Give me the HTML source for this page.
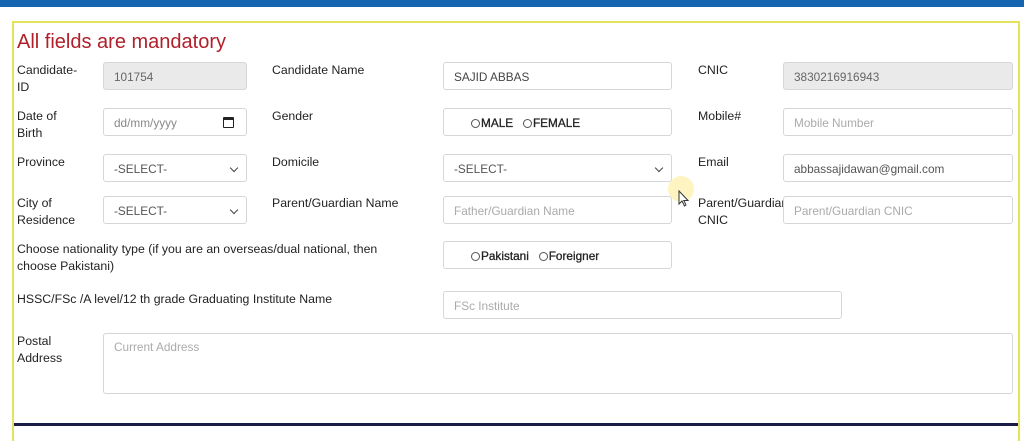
<!DOCTYPE html>
<html><head><style>
*{box-sizing:border-box;margin:0;padding:0}
body{width:1024px;height:429px;overflow:hidden;background:#fff;font-family:"Liberation Sans",sans-serif;color:#222;position:relative}
.top{position:absolute;left:0;top:0;width:1024px;height:7px;background:#1565b0}
.frame{position:absolute;left:12px;top:21px;width:1008px;height:420px;border:2px solid #e4e45a;border-bottom:none}
.h{position:absolute;left:17px;top:31px;font-size:20px;color:#b0202a}
.l{position:absolute;font-size:12.3px;line-height:17px;color:#222}
.i{position:absolute;height:28px;border:1px solid #d6d6d6;border-radius:3px;background:#fff;font-size:11.8px;color:#555;padding:0 10px;line-height:28px;white-space:nowrap}
.g{background:#eaeaea;color:#666}
.p{color:#aaa}
.s::after{content:"";position:absolute;right:9px;top:10px;width:5px;height:5px;border-right:1.5px solid #444;border-bottom:1.5px solid #444;transform:rotate(45deg)}
.r{color:#333;font-size:11.8px}
.r b{font-weight:normal;color:#222;-webkit-text-stroke:0.3px #222}
.r span{display:inline-block;width:9px;height:9px;border:1px solid #555;border-radius:50%;vertical-align:-1px;margin-right:1px}
.line{position:absolute;left:14px;top:423px;width:1004px;height:3px;background:#1b1b4a}
</style></head><body>
<div class="top"></div>
<div class="frame"></div>
<div class="h">All fields are mandatory</div>

<div class="l" style="left:17px;top:62px">Candidate-<br>ID</div>
<div class="i g" style="left:103px;top:62px;width:144px">101754</div>
<div class="l" style="left:272px;top:62px">Candidate Name</div>
<div class="i" style="left:443px;top:62px;width:229px;color:#444">SAJID ABBAS</div>
<div class="l" style="left:698px;top:62px">CNIC</div>
<div class="i g" style="left:783px;top:62px;width:230px">3830216916943</div>

<div class="l" style="left:17px;top:108px">Date of<br>Birth</div>
<div class="i p" style="left:103px;top:108px;width:144px;color:#888">dd/mm/yyyy<span style="position:absolute;right:12px;top:8px;width:11px;height:11px;border:1.5px solid #222;border-top-width:3px;border-radius:1px"></span></div>
<div class="l" style="left:272px;top:108px">Gender</div>
<div class="i r" style="left:443px;top:108px;width:229px;padding-left:27px"><span></span><b>MALE</b> &nbsp;&nbsp;<span></span><b>FEMALE</b></div>
<div class="l" style="left:698px;top:108px">Mobile#</div>
<div class="i p" style="left:783px;top:108px;width:230px">Mobile Number</div>

<div class="l" style="left:17px;top:154px">Province</div>
<div class="i s" style="left:103px;top:154px;width:144px">-SELECT-</div>
<div class="l" style="left:272px;top:154px">Domicile</div>
<div class="i s" style="left:443px;top:154px;width:229px">-SELECT-</div>
<div class="l" style="left:698px;top:154px">Email</div>
<div class="i" style="left:783px;top:154px;width:230px">abbassajidawan@gmail.com</div>

<div class="l" style="left:17px;top:195px">City of<br>Residence</div>
<div class="i s" style="left:103px;top:196px;width:144px">-SELECT-</div>
<div class="l" style="left:272px;top:195px">Parent/Guardian Name</div>
<div class="i p" style="left:443px;top:196px;width:229px">Father/Guardian Name</div>
<div class="l" style="left:698px;top:195px;width:85px;overflow:hidden;white-space:nowrap">Parent/Guardian<br>CNIC</div>
<div class="i p" style="left:783px;top:196px;width:230px">Parent/Guardian CNIC</div>

<div class="l" style="left:17px;top:241px">Choose nationality type (if you are an overseas/dual national, then<br>choose Pakistani)</div>
<div class="i r" style="left:443px;top:241px;width:229px;padding-left:27px"><span></span><b>Pakistani</b> &nbsp;&nbsp;<span></span><b>Foreigner</b></div>

<div class="l" style="left:17px;top:291px">HSSC/FSc /A level/12 th grade Graduating Institute Name</div>
<div class="i p" style="left:443px;top:291px;width:399px">FSc Institute</div>

<div class="l" style="left:17px;top:333px">Postal<br>Address</div>
<div class="i p" style="left:103px;top:333px;width:910px;height:61px;line-height:26px">Current Address</div>

<div style="position:absolute;left:668px;top:176px;width:26px;height:26px;border-radius:50%;background:rgba(250,230,120,.45)"></div>
<svg style="position:absolute;left:678px;top:190px" width="12" height="18" viewBox="0 0 12 18"><path d="M1 1 L1 14 L4 11 L6.5 16 L8 15 L5.8 10.5 L10 10.5 Z" fill="#fff" stroke="#333" stroke-width="1"/></svg>
<div class="line"></div>
</body></html>
